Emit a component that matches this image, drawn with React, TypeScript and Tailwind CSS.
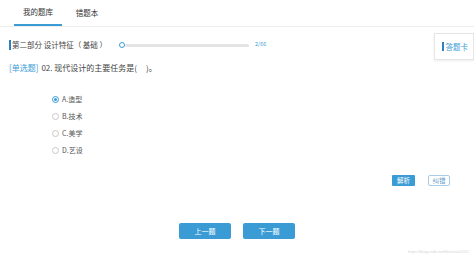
import React from "react";

const font = { fontFamily: '"Noto Sans CJK SC", "Noto Sans", sans-serif' };

export default function App() {
  const options = ["A.造型", "B.技术", "C.美学", "D.艺设"];
  return (
    <div className="relative w-[474px] h-[257px] bg-white overflow-hidden text-[#555]" style={font}>
      {/* tab bar */}
      <div className="flex h-[27px] border-b border-[#ececec]">
        <div className="ml-[14px] w-[48px] h-full flex items-center justify-center border-b-2 border-[#3a9bd5] text-[7.5px] text-[#333]">
          我的题库
        </div>
        <div className="ml-[12px] w-[26px] h-full flex items-center justify-center text-[7.5px] text-[#333]">
          错题本
        </div>
      </div>

      {/* answer card */}
      <div className="absolute right-0 top-[33px] w-[40px] h-[27px] border border-[#e6e6e6] bg-white shadow-[0_1px_2px_rgba(0,0,0,0.08)] flex items-center pl-[7px]">
        <div className="w-[1.5px] h-[9px] bg-[#2f7fc0]" />
        <span className="ml-[2px] text-[7.5px] text-[#3a9bd5] leading-none">答题卡</span>
      </div>

      <div className="pl-[9px] pt-[12px]">
        {/* section title */}
        <div className="flex items-center h-[12px]">
          <div className="w-[2px] h-[10px] bg-[#2f7fc0]" />
          <span className="ml-[1px] text-[7.5px] text-[#444] leading-none whitespace-nowrap">第二部分 设计特征（ 基础 ）</span>
          <div className="ml-[12px] flex items-center">
            <div className="w-[6px] h-[6px] rounded-full border-[1.5px] border-[#3a9bd5] bg-white" />
            <div className="w-[124px] h-[3px] bg-[#e4e4e4] rounded-full" />
            <span className="ml-[6px] text-[5.5px] text-[#3a9bd5] leading-none">2/66</span>
          </div>
        </div>

        {/* question */}
        <div className="mt-[11px] flex items-center h-[12px] text-[8px] leading-none whitespace-nowrap">
          <span className="text-[#3a9bd5]">[单选题]</span>
          <span className="ml-[3px] text-[#444]">02. 现代设计的主要任务是(&nbsp;&nbsp;&nbsp;&nbsp;&nbsp;)。</span>
        </div>

        {/* options */}
        <div className="mt-[22px] ml-[43px] flex flex-col gap-[10px]">
          {options.map((o, i) => (
            <div key={o} className="flex items-center h-[7px]">
              <div
                className={
                  i === 0
                    ? "w-[7px] h-[7px] rounded-full border border-[#3a9bd5] flex items-center justify-center"
                    : "w-[7px] h-[7px] rounded-full border border-[#c8c8c8]"
                }
              >
                {i === 0 && <div className="w-[3px] h-[3px] rounded-full bg-[#3a9bd5]" />}
              </div>
              <span className="ml-[3px] text-[7px] text-[#555] leading-none">{o}</span>
            </div>
          ))}
        </div>
      </div>

      {/* analysis buttons */}
      <div className="mt-[21px] flex justify-end pr-[24px] gap-[13px]">
        <div className="w-[23px] h-[11px] bg-[#3a9bd5] rounded-[1px] flex items-center justify-center text-[6.5px] text-white leading-none">
          解析
        </div>
        <div className="w-[22px] h-[11px] border border-[#a9cbe6] rounded-[2px] flex items-center justify-center text-[6.5px] text-[#6a9cc8] leading-none">
          纠错
        </div>
      </div>

      {/* nav buttons */}
      <div className="mt-[37px] flex justify-center gap-[12px]">
        <div className="w-[52px] h-[16px] bg-[#3a9bd5] rounded-[2px] flex items-center justify-center text-[7px] text-white leading-none">
          上一题
        </div>
        <div className="w-[52px] h-[16px] bg-[#3a9bd5] rounded-[2px] flex items-center justify-center text-[7px] text-white leading-none">
          下一题
        </div>
      </div>

      {/* watermark */}
      <div className="absolute right-[5px] bottom-[3px] text-[4px] text-[#d5d5d5] leading-none whitespace-nowrap" style={{ fontFamily: '"Liberation Sans", sans-serif' }}>
        https://blog.csdn.net/fleechan2021
      </div>
    </div>
  );
}
